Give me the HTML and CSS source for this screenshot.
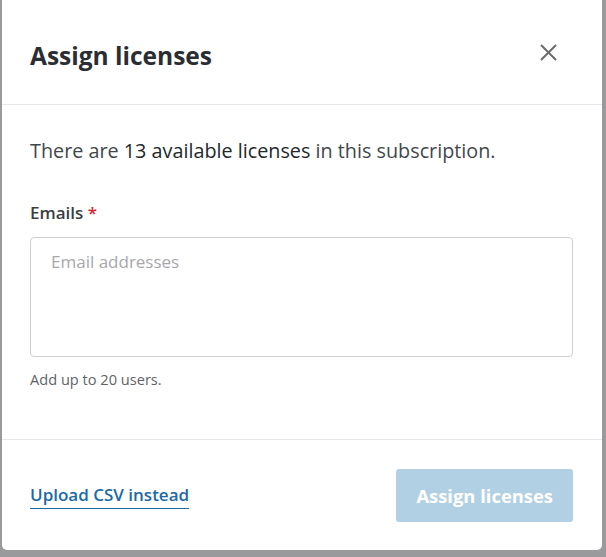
FILE: index.html
```html
<!DOCTYPE html>
<html lang="en">
  <head>
    <meta charset="UTF-8" />
    <meta name="viewport" content="width=device-width, initial-scale=1.0" />
    <title>Assign licenses</title>
    <link rel="stylesheet" href="styles.css">
  </head>
  <body>
    <div class="modal">
      <div class="modal_head">
        <h2 class="title">Assign licenses</h2>
        <button class="close" type="button" aria-label="Close">
          <svg width="17" height="17" viewBox="0 0 17 17">
            <path d="M1 1 L16 16 M16 1 L1 16" stroke="#6b6b6b" stroke-width="2" fill="none" />
          </svg>
        </button>
      </div>
      <div class="modal_body">
        <p class="info">There are <strong>13 available licenses</strong> in this subscription.</p>
        <label class="label" for="emails">Emails <span class="req">*</span></label>
        <textarea id="emails" class="field" placeholder="Email addresses"></textarea>
        <p class="hint">Add up to 20 users.</p>
      </div>
      <div class="modal_foot">
        <a href="" class="upload">Upload CSV instead</a>
        <button class="submit" type="button" disabled>Assign licenses</button>
      </div>
    </div>
  </body>
</html>
```

FILE: styles.css
```css
* {
  margin: 0;
  padding: 0;
  box-sizing: border-box;
}
body {
  background: #9a9a9c;
  font-family: "Open Sans", "Noto Sans", sans-serif;
  color: #43474c;
  height: 557px;
  overflow: hidden;
}
.modal {
  margin-left: 2px;
  width: 600px;
  height: 550px;
  background: #fff;
  border-radius: 0 0 5px 5px;
  display: flex;
  flex-direction: column;
}
.modal_head {
  height: 105px;
  padding: 40px 29px 0 28px;
  border-bottom: 1px solid #e7e7ec;
  display: flex;
  justify-content: space-between;
  align-items: flex-start;
}
.modal_head .title {
  font-size: 24.5px;
  line-height: 32px;
  font-weight: 700;
  color: #2a2e33;
}
.modal_head .close {
  border: 0;
  background: none;
  width: 17px;
  height: 17px;
  margin: 4px 16px 0 0;
  display: block;
  cursor: pointer;
}
.modal_head .close svg {
  display: block;
}
.modal_body {
  padding: 32px 29px 50px 28px;
  border-bottom: 1px solid #e7e7ec;
}
.modal_body .info {
  font-size: 19.8px;
  line-height: 27px;
}
.modal_body .info strong {
  font-weight: 400;
  color: #24272b;
}
.modal_body .label {
  display: block;
  margin-top: 37px;
  font-size: 17px;
  line-height: 24px;
  font-weight: 600;
  color: #3a3e43;
}
.modal_body .req {
  color: #d9232e;
}
.modal_body .field {
  display: block;
  width: 100%;
  height: 120px;
  margin-top: 12px;
  padding: 12px 20px;
  border: 1px solid #cfd0d6;
  border-radius: 4px;
  font-family: inherit;
  font-size: 17px;
  line-height: 24px;
  resize: none;
  outline: none;
}
.modal_body .field::placeholder {
  color: #a8a8ab;
}
.modal_body .hint {
  margin-top: 12px;
  font-size: 14.6px;
  line-height: 20px;
  color: #5f6368;
}
.modal_foot {
  flex: 1;
  padding: 0 29px 0 28px;
  display: flex;
  justify-content: space-between;
  align-items: center;
}
.modal_foot .upload {
  font-size: 17px;
  line-height: 26px;
  font-weight: 600;
  color: #1b6aa5;
  text-decoration: none;
  border-bottom: 1.5px solid #1b6aa5;
  margin-top: 1px;
}
.modal_foot .submit {
  height: 53px;
  padding: 0 20px;
  border: 0;
  border-radius: 3px;
  background: #b2d0e4;
  color: #fff;
  font-family: inherit;
  font-size: 18.4px;
  font-weight: 700;
  line-height: 51px;
}
```
